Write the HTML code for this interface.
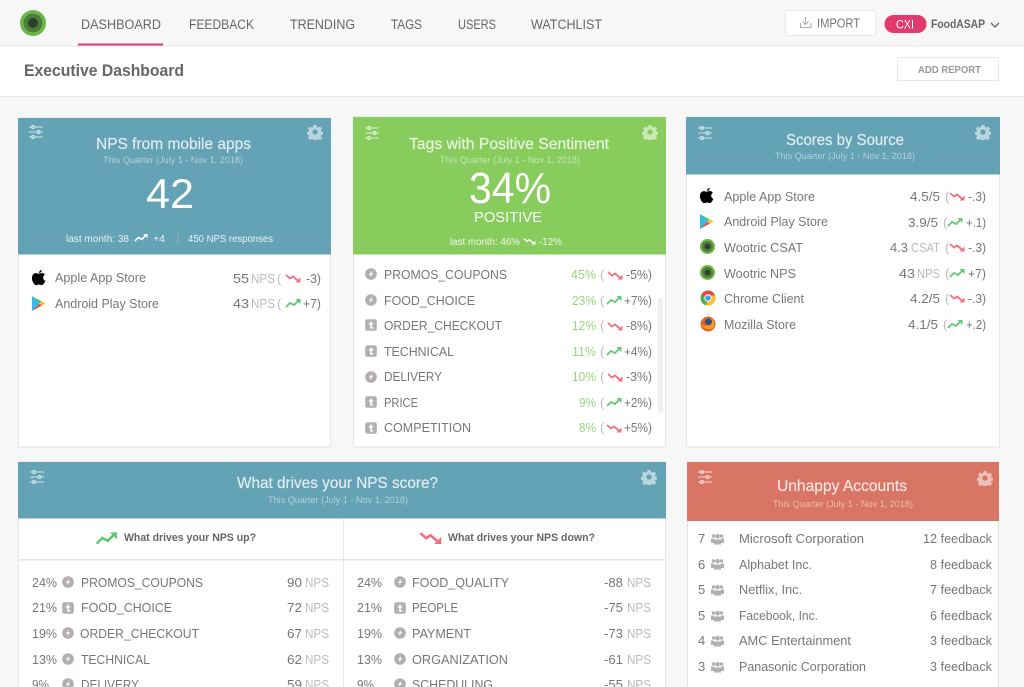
<!DOCTYPE html>
<html lang="en"><head><meta charset="utf-8"><title>Executive Dashboard</title>
<style>
html,body{margin:0;padding:0;width:1024px;height:687px;overflow:hidden;background:#f7f7f7}
svg{display:block;filter:blur(.35px)}
text{font-family:"Liberation Sans",sans-serif;font-size:13px;fill:#777}
.nav{font-size:13.5px;fill:#666}
.h{font-size:16px;fill:#fff;opacity:.8;stroke:#fff;stroke-width:.2}
.s{font-size:9.5px;fill:#fff;opacity:.5}
.f{font-size:10px;fill:#fff;opacity:.85}
.g{fill:#98d67e}.m{fill:#bbb}.b{font-weight:bold;font-size:11px;fill:#666}
.card{fill:#fff;stroke:#e6e6e6}
</style></head><body>
<svg width="1024" height="687" viewBox="0 0 1024 687" xmlns="http://www.w3.org/2000/svg">
<defs>
<symbol id="up" viewBox="0 0 16 10"><path d="M1 9 5 5 9 7 14 2" fill="none" stroke="#5fc974" stroke-width="1.8"/><path d="M10.500 1H15.500V6Z" fill="#5fc974"/></symbol>
<symbol id="dn" viewBox="0 0 16 10"><path d="M1 2 5 5.500 8 3.500 14 8.500" fill="none" stroke="#ef7080" stroke-width="1.8"/><path d="M10.500 9.500H15.500V4.500Z" fill="#ef7080"/></symbol>
<symbol id="wu" viewBox="0 0 16 10"><path d="M1 9 5 5 9 7 14 2" fill="none" stroke="#fff" stroke-width="1.800"/><path d="M10.500 1H15.500V6Z" fill="#fff"/></symbol>
<symbol id="wd" viewBox="0 0 16 10"><path d="M1 2 5 5.500 8 3.500 14 8.500" fill="none" stroke="#fff" stroke-width="1.800"/><path d="M10.500 9.500H15.500V4.500Z" fill="#fff"/></symbol>
<symbol id="fl" viewBox="0 0 16 16" opacity=".7"><path d="M1 3H15M1 8H15M1 13H15" stroke="#fff" stroke-width="1"/><circle cx="5" cy="3" r="1.600" fill="none" stroke="#fff"/><circle cx="10.500" cy="8" r="1.600" fill="none" stroke="#fff"/><circle cx="5" cy="13" r="1.600" fill="none" stroke="#fff"/></symbol>
<symbol id="gr" viewBox="0 0 16 16" opacity=".55"><path fill-rule="evenodd" d="M6.500 1h3l.4 2 1.400.6 1.700-1.100 2.100 2.100-1.100 1.700.6 1.400 2 .4v2.400l-2 .4-.6 1.400 1.100 1.700-2.100 2.100-1.700-1.100-1.400.6-.4 1.800h-3l-.4-1.800-1.400-.6-1.700 1.100-2.100-2.100 1.100-1.700-.6-1.400-2-.4v-2.400l2-.4.6-1.400-1.100-1.700 2.100-2.100 1.700 1.100 1.400-.6zM8 5.400a2.600 2.600 0 1 0 0 5.200a2.600 2.600 0 1 0 0-5.200z" fill="#fff"/></symbol>
<symbol id="ap" viewBox="0 0 16 18"><path d="M11.500 1c.1 1.500-1.300 3.200-3 3.100C8.400 2.500 10 1.100 11.500 1ZM8.300 5c.8 0 1.800-.8 3.300-.8 1.300 0 2.500.7 3.200 1.800-2.700 1.700-2.300 5.300.5 6.500-.7 2-2.300 4.700-3.900 4.700-1 0-1.500-.7-2.800-.7s-1.900.7-2.800.7C3.500 17.200 1 13 1 9.600c0-3.300 2.100-5.300 4.200-5.300 1.300 0 2.400.7 3.100.7Z" fill="#000"/></symbol>
<symbol id="pl" viewBox="0 0 16 18"><path d="M1 1 9 9 1 17Z" fill="#35b8e8"/><path d="M1 1 11.500 6.800 9 9Z" fill="#46c37b"/><path d="M1 17 11.500 11.200 9 9Z" fill="#e84a4a"/><path d="M11.500 6.800 15.500 9 11.500 11.200 9 9Z" fill="#fbc02d"/></symbol>
<symbol id="wo" viewBox="0 0 26 26"><circle cx="13" cy="13" r="13" fill="#6cb847"/><circle cx="13" cy="13" r="9.500" fill="#4d7f3a"/><circle cx="13" cy="13" r="5" fill="#2f3f2e"/></symbol>
<symbol id="ch" viewBox="0 0 16 16"><circle cx="8" cy="8" r="7.500" fill="#e6493c"/><path d="M8 8 1.500 4.500A7.500 7.500 0 0 0 6 15.300Z" fill="#4caf50"/><path d="M8 8 6 15.300A7.500 7.500 0 0 0 15 5.500H8Z" fill="#fbc02d"/><circle cx="8" cy="8" r="3.700" fill="#fff"/><circle cx="8" cy="8" r="2.800" fill="#4a9fe8"/></symbol>
<symbol id="ff" viewBox="0 0 16 16"><circle cx="8" cy="8" r="7.500" fill="#e8611f"/><path d="M1 8C3 13 10 15 14 11 15 8 14 5 12 3 9 1 5 2 5 5 8 5 11 7 8 9 6 10 3 10 1 8Z" fill="#f49b1d"/><circle cx="8.500" cy="5.800" r="3.500" fill="#2f4f88"/></symbol>
<symbol id="bo" viewBox="0 0 12 12"><circle cx="6" cy="6" r="5.800" fill="#b3aeb0"/><path d="M7.500 2.500 3.800 6.800H5.800L4.500 9.500 8.300 5.200H6.300Z" fill="#fff"/></symbol>
<symbol id="tt" viewBox="0 0 12 12"><rect x=".2" y=".2" width="11.600" height="11.600" rx="2.200" fill="#b3aeb0"/><path d="M5.200 2.500H6.800V4.300H8.300V5.600H6.800V8.300H8.300V9.600H5.200V5.600H3.800V4.300H5.200Z" fill="#fff"/></symbol>
<symbol id="pp" viewBox="0 0 13 12"><g fill="#b3aeb0"><circle cx="2.500" cy="3" r="1.700"/><circle cx="10.500" cy="3" r="1.700"/><circle cx="6.500" cy="3.200" r="2.300"/><path d="M0 5.500H3V10H0ZM10 5.500H13V10H10ZM3 6.500H10V11.500H3Z"/></g></symbol>
</defs>

<!-- top nav -->
<rect x="0" y="0" width="1024" height="46" fill="#f7f7f7"/>
<use href="#wo" x="20" y="10" width="26" height="26"/>
<text class="nav" lengthAdjust="spacingAndGlyphs" x="81" y="29" textLength="80">DASHBOARD</text>
<text class="nav" lengthAdjust="spacingAndGlyphs" x="189" y="29" textLength="65">FEEDBACK</text>
<text class="nav" lengthAdjust="spacingAndGlyphs" x="290" y="29" textLength="65">TRENDING</text>
<text class="nav" lengthAdjust="spacingAndGlyphs" x="391" y="29" textLength="31">TAGS</text>
<text class="nav" lengthAdjust="spacingAndGlyphs" x="458" y="29" textLength="38">USERS</text>
<text class="nav" lengthAdjust="spacingAndGlyphs" x="531" y="29" textLength="71">WATCHLIST</text>
<rect x="78" y="43.500" width="85" height="2" fill="#e8386e"/>
<rect x="785.500" y="10.500" width="90" height="25" rx="2" fill="#fff" stroke="#e8e8e8"/>
<path d="M805.500 17v7.500M802.500 21.500l3 3 3-3M800.500 23v4.500h10.500V23" fill="none" stroke="#aaa"/>
<text lengthAdjust="spacingAndGlyphs" x="817" y="27.500" textLength="43" style="font-size:12.500px">IMPORT</text>
<rect x="884.500" y="15" width="42" height="18" rx="9" fill="#e23a6e"/>
<text lengthAdjust="spacingAndGlyphs" x="896" y="28.500" textLength="18" style="font-size:12px;fill:#fff">CXI</text>
<text lengthAdjust="spacingAndGlyphs" x="931" y="28" textLength="54" style="font-size:11.500px;fill:#666;font-weight:bold">FoodASAP</text>
<path d="M991 23l4 4 4-4" fill="none" stroke="#666" stroke-width="1.300"/>
<rect x="0" y="46" width="1024" height="50" fill="#fff"/>
<rect x="0" y="45.500" width="1024" height="1" fill="#e5e5e5"/>
<rect x="0" y="96" width="1024" height="1" fill="#e5e5e5"/>
<text lengthAdjust="spacingAndGlyphs" x="24" y="76" textLength="160" style="font-size:16.500px;font-weight:bold;fill:#666">Executive Dashboard</text>
<rect x="897.500" y="57.500" width="101" height="23" fill="#fff" stroke="#e8e8e8"/>
<text lengthAdjust="spacingAndGlyphs" x="918" y="73" textLength="63" style="font-size:10.500px;fill:#999;font-weight:bold">ADD REPORT</text>

<!-- card 1 -->
<rect class="card" x="18.500" y="118" width="312" height="329"/>
<rect x="18" y="118" width="313" height="136.500" fill="#64a2b5"/>
<use href="#fl" x="28" y="124" width="16" height="16"/>
<use href="#gr" x="307" y="124" width="16" height="16"/>
<text class="h" lengthAdjust="spacingAndGlyphs" x="96" y="149" textLength="155">NPS from mobile apps</text>
<text class="s" lengthAdjust="spacingAndGlyphs" x="103" y="163" textLength="140">This Quarter (July 1 - Nov 1, 2018)</text>
<text lengthAdjust="spacingAndGlyphs" x="146" y="208" textLength="48" style="font-size:42px;fill:#fff">42</text>
<text class="f" lengthAdjust="spacingAndGlyphs" x="66" y="242" textLength="63">last month: 38</text>
<use href="#wu" x="134" y="233" width="14" height="9"/>
<text class="f" lengthAdjust="spacingAndGlyphs" x="153" y="242" textLength="12">+4</text>
<rect x="177.500" y="232" width="1" height="12" fill="#fff" opacity=".2"/>
<text class="f" lengthAdjust="spacingAndGlyphs" x="188" y="242" textLength="85">450 NPS responses</text>
<use href="#ap" x="31" y="269" width="15" height="17"/>
<use href="#pl" x="31" y="295" width="15" height="17"/>
<text lengthAdjust="spacingAndGlyphs" x="55" y="282" textLength="91">Apple App Store</text>
<text lengthAdjust="spacingAndGlyphs" x="55" y="308" textLength="104">Android Play Store</text>
<text lengthAdjust="spacingAndGlyphs" x="233" y="283" textLength="16">55</text><text class="m" lengthAdjust="spacingAndGlyphs" x="251" y="283" textLength="24">NPS</text><text class="m" x="277" y="283">(</text>
<use href="#dn" x="285" y="273" width="16" height="10"/><text lengthAdjust="spacingAndGlyphs" x="306" y="283" textLength="15">-3)</text>
<text lengthAdjust="spacingAndGlyphs" x="233" y="308" textLength="16">43</text><text class="m" lengthAdjust="spacingAndGlyphs" x="251" y="308" textLength="24">NPS</text><text class="m" x="277" y="308">(</text>
<use href="#up" x="285" y="298" width="16" height="10"/><text lengthAdjust="spacingAndGlyphs" x="303" y="308" textLength="18">+7)</text>

<!-- card 2 -->
<rect class="card" x="353.500" y="117" width="312" height="330"/>
<rect x="353" y="117" width="313" height="137.500" fill="#88cc5e"/>
<use href="#fl" x="364" y="125" width="16" height="16"/>
<use href="#gr" x="642" y="124" width="16" height="16"/>
<text class="h" lengthAdjust="spacingAndGlyphs" x="409" y="149" textLength="200">Tags with Positive Sentiment</text>
<text class="s" lengthAdjust="spacingAndGlyphs" x="440" y="163" textLength="140">This Quarter (July 1 - Nov 1, 2018)</text>
<text lengthAdjust="spacingAndGlyphs" x="469" y="203" textLength="82" style="font-size:44px;fill:#fff">34%</text>
<text lengthAdjust="spacingAndGlyphs" x="474" y="222" textLength="68" style="font-size:15px;fill:#fff;opacity:.95">POSITIVE</text>
<text class="f" lengthAdjust="spacingAndGlyphs" x="450" y="245" textLength="70">last month: 46%</text>
<use href="#wd" x="523" y="237" width="13" height="8"/>
<text class="f" lengthAdjust="spacingAndGlyphs" x="539" y="245" textLength="23">-12%</text>
<rect x="658" y="298" width="5" height="115" rx="2.500" fill="#eeeeee"/>

<use href="#bo" x="365" y="268" width="12" height="12"/><text lengthAdjust="spacingAndGlyphs" x="384" y="279" textLength="123">PROMOS_COUPONS</text>
<text class="g" lengthAdjust="spacingAndGlyphs" x="571" y="279" textLength="25">45%</text><text class="m" x="600" y="279">(</text><use href="#dn" x="607" y="270" width="16" height="10"/><text lengthAdjust="spacingAndGlyphs" x="626" y="279" textLength="26">-5%)</text>
<use href="#bo" x="365" y="294" width="12" height="12"/><text lengthAdjust="spacingAndGlyphs" x="384" y="305" textLength="91">FOOD_CHOICE</text>
<text class="g" lengthAdjust="spacingAndGlyphs" x="572" y="305" textLength="24">23%</text><text class="m" x="600" y="305">(</text><use href="#up" x="606" y="295" width="16" height="10"/><text lengthAdjust="spacingAndGlyphs" x="624" y="305" textLength="28">+7%)</text>
<use href="#tt" x="365" y="319" width="12" height="12"/><text lengthAdjust="spacingAndGlyphs" x="384" y="330" textLength="118">ORDER_CHECKOUT</text>
<text class="g" lengthAdjust="spacingAndGlyphs" x="572" y="330" textLength="24">12%</text><text class="m" x="600" y="330">(</text><use href="#dn" x="607" y="321" width="16" height="10"/><text lengthAdjust="spacingAndGlyphs" x="626" y="330" textLength="26">-8%)</text>
<use href="#tt" x="365" y="345" width="12" height="12"/><text lengthAdjust="spacingAndGlyphs" x="384" y="356" textLength="70">TECHNICAL</text>
<text class="g" lengthAdjust="spacingAndGlyphs" x="572" y="356" textLength="24">11%</text><text class="m" x="600" y="356">(</text><use href="#up" x="606" y="346" width="16" height="10"/><text lengthAdjust="spacingAndGlyphs" x="624" y="356" textLength="28">+4%)</text>
<use href="#bo" x="365" y="371" width="12" height="12"/><text lengthAdjust="spacingAndGlyphs" x="384" y="381" textLength="58">DELIVERY</text>
<text class="g" lengthAdjust="spacingAndGlyphs" x="572" y="381" textLength="24">10%</text><text class="m" x="600" y="381">(</text><use href="#dn" x="607" y="372" width="16" height="10"/><text lengthAdjust="spacingAndGlyphs" x="626" y="381" textLength="26">-3%)</text>
<use href="#tt" x="365" y="396" width="12" height="12"/><text lengthAdjust="spacingAndGlyphs" x="384" y="407" textLength="34">PRICE</text>
<text class="g" lengthAdjust="spacingAndGlyphs" x="579" y="407" textLength="17">9%</text><text class="m" x="600" y="407">(</text><use href="#up" x="606" y="397" width="16" height="10"/><text lengthAdjust="spacingAndGlyphs" x="624" y="407" textLength="28">+2%)</text>
<use href="#tt" x="365" y="422" width="12" height="12"/><text lengthAdjust="spacingAndGlyphs" x="384" y="432" textLength="87">COMPETITION</text>
<text class="g" lengthAdjust="spacingAndGlyphs" x="579" y="432" textLength="17">8%</text><text class="m" x="600" y="432">(</text><use href="#dn" x="606" y="423" width="16" height="10"/><text lengthAdjust="spacingAndGlyphs" x="624" y="432" textLength="28">+5%)</text>

<!-- card 3 -->
<rect class="card" x="686.500" y="117" width="313" height="330"/>
<rect x="686" y="117" width="314" height="57.500" fill="#64a2b5"/>
<use href="#fl" x="697" y="125" width="16" height="16"/>
<use href="#gr" x="975" y="124" width="16" height="16"/>
<text class="h" lengthAdjust="spacingAndGlyphs" x="786" y="145" textLength="118">Scores by Source</text>
<text class="s" lengthAdjust="spacingAndGlyphs" x="775" y="159" textLength="140">This Quarter (July 1 - Nov 1, 2018)</text>
<use href="#ap" x="699" y="187" width="15" height="17"/><text lengthAdjust="spacingAndGlyphs" x="724" y="201" textLength="91">Apple App Store</text>
<use href="#pl" x="699" y="213" width="15" height="17"/><text lengthAdjust="spacingAndGlyphs" x="724" y="226" textLength="104">Android Play Store</text>
<use href="#wo" x="700" y="239" width="15" height="15"/><text lengthAdjust="spacingAndGlyphs" x="724" y="252" textLength="79">Wootric CSAT</text>
<use href="#wo" x="700" y="265" width="15" height="15"/><text lengthAdjust="spacingAndGlyphs" x="724" y="278" textLength="72">Wootric NPS</text>
<use href="#ch" x="700" y="290" width="16" height="16"/><text lengthAdjust="spacingAndGlyphs" x="724" y="303" textLength="80">Chrome Client</text>
<use href="#ff" x="700" y="316" width="16" height="16"/><text lengthAdjust="spacingAndGlyphs" x="724" y="329" textLength="72">Mozilla Store</text>
<text lengthAdjust="spacingAndGlyphs" x="910" y="201" textLength="30">4.5/5</text><text class="m" x="945" y="201">(</text><use href="#dn" x="949" y="191" width="16" height="10"/><text lengthAdjust="spacingAndGlyphs" x="968" y="201" textLength="18">-.3)</text>
<text lengthAdjust="spacingAndGlyphs" x="908" y="227" textLength="30">3.9/5</text><text class="m" x="943" y="227">(</text><use href="#up" x="947" y="217" width="16" height="10"/><text lengthAdjust="spacingAndGlyphs" x="966" y="227" textLength="20">+.1)</text>
<text lengthAdjust="spacingAndGlyphs" x="890" y="252" textLength="18">4.3</text><text class="m" lengthAdjust="spacingAndGlyphs" x="911" y="252" textLength="29">CSAT</text><text class="m" x="945" y="252">(</text><use href="#dn" x="949" y="242" width="16" height="10"/><text lengthAdjust="spacingAndGlyphs" x="968" y="252" textLength="18">-.3)</text>
<text lengthAdjust="spacingAndGlyphs" x="899" y="278" textLength="16">43</text><text class="m" lengthAdjust="spacingAndGlyphs" x="917" y="278" textLength="23">NPS</text><text class="m" x="945" y="278">(</text><use href="#up" x="949" y="268" width="16" height="10"/><text lengthAdjust="spacingAndGlyphs" x="968" y="278" textLength="18">+7)</text>
<text lengthAdjust="spacingAndGlyphs" x="910" y="303" textLength="30">4.2/5</text><text class="m" x="945" y="303">(</text><use href="#dn" x="949" y="293" width="16" height="10"/><text lengthAdjust="spacingAndGlyphs" x="968" y="303" textLength="18">-.3)</text>
<text lengthAdjust="spacingAndGlyphs" x="908" y="329" textLength="30">4.1/5</text><text class="m" x="943" y="329">(</text><use href="#up" x="947" y="319" width="16" height="10"/><text lengthAdjust="spacingAndGlyphs" x="966" y="329" textLength="20">+.2)</text>

<!-- card 4 -->
<rect class="card" x="18.500" y="462" width="647" height="240"/>
<rect x="18" y="462" width="648" height="56.500" fill="#64a2b5"/>
<use href="#fl" x="29" y="469" width="16" height="16"/>
<use href="#gr" x="641" y="469" width="16" height="16"/>
<text class="h" lengthAdjust="spacingAndGlyphs" x="237" y="488" textLength="201">What drives your NPS score?</text>
<text class="s" lengthAdjust="spacingAndGlyphs" x="268" y="503" textLength="140">This Quarter (July 1 - Nov 1, 2018)</text>
<rect x="18" y="559" width="648" height="1.500" fill="#e6e6e6"/>
<rect x="343" y="518" width="1" height="169" fill="#e6e6e6"/>
<use href="#up" x="95" y="531" width="23" height="14"/>
<text class="b" lengthAdjust="spacingAndGlyphs" x="124" y="541" textLength="132">What drives your NPS up?</text>
<use href="#dn" x="419" y="530" width="23" height="15"/>
<text class="b" lengthAdjust="spacingAndGlyphs" x="448" y="541" textLength="147">What drives your NPS down?</text>

<text lengthAdjust="spacingAndGlyphs" x="32" y="587" textLength="25">24%</text><use href="#bo" x="62" y="576" width="12" height="12"/><text lengthAdjust="spacingAndGlyphs" x="81" y="587" textLength="122">PROMOS_COUPONS</text><text lengthAdjust="spacingAndGlyphs" x="287" y="587" textLength="15">90</text><text class="m" lengthAdjust="spacingAndGlyphs" x="305" y="587" textLength="24">NPS</text>
<text lengthAdjust="spacingAndGlyphs" x="32" y="612" textLength="25">21%</text><use href="#tt" x="62" y="602" width="12" height="12"/><text lengthAdjust="spacingAndGlyphs" x="81" y="612" textLength="91">FOOD_CHOICE</text><text lengthAdjust="spacingAndGlyphs" x="287" y="612" textLength="15">72</text><text class="m" lengthAdjust="spacingAndGlyphs" x="305" y="612" textLength="24">NPS</text>
<text lengthAdjust="spacingAndGlyphs" x="32" y="638" textLength="25">19%</text><use href="#bo" x="62" y="627" width="12" height="12"/><text lengthAdjust="spacingAndGlyphs" x="80" y="638" textLength="119">ORDER_CHECKOUT</text><text lengthAdjust="spacingAndGlyphs" x="287" y="638" textLength="15">67</text><text class="m" lengthAdjust="spacingAndGlyphs" x="305" y="638" textLength="24">NPS</text>
<text lengthAdjust="spacingAndGlyphs" x="32" y="664" textLength="25">13%</text><use href="#bo" x="62" y="653" width="12" height="12"/><text lengthAdjust="spacingAndGlyphs" x="81" y="664" textLength="69">TECHNICAL</text><text lengthAdjust="spacingAndGlyphs" x="287" y="664" textLength="15">62</text><text class="m" lengthAdjust="spacingAndGlyphs" x="305" y="664" textLength="24">NPS</text>
<text lengthAdjust="spacingAndGlyphs" x="32" y="689" textLength="17">9%</text><use href="#bo" x="62" y="678" width="12" height="12"/><text lengthAdjust="spacingAndGlyphs" x="81" y="689" textLength="58">DELIVERY</text><text lengthAdjust="spacingAndGlyphs" x="287" y="689" textLength="15">59</text><text class="m" lengthAdjust="spacingAndGlyphs" x="305" y="689" textLength="24">NPS</text>

<text lengthAdjust="spacingAndGlyphs" x="357" y="587" textLength="25">24%</text><use href="#bo" x="394" y="576" width="12" height="12"/><text lengthAdjust="spacingAndGlyphs" x="412" y="587" textLength="97">FOOD_QUALITY</text><text lengthAdjust="spacingAndGlyphs" x="604" y="587" textLength="19">-88</text><text class="m" lengthAdjust="spacingAndGlyphs" x="627" y="587" textLength="24">NPS</text>
<text lengthAdjust="spacingAndGlyphs" x="357" y="612" textLength="25">21%</text><use href="#tt" x="394" y="602" width="12" height="12"/><text lengthAdjust="spacingAndGlyphs" x="412" y="612" textLength="46">PEOPLE</text><text lengthAdjust="spacingAndGlyphs" x="604" y="612" textLength="19">-75</text><text class="m" lengthAdjust="spacingAndGlyphs" x="627" y="612" textLength="24">NPS</text>
<text lengthAdjust="spacingAndGlyphs" x="357" y="638" textLength="25">19%</text><use href="#bo" x="394" y="627" width="12" height="12"/><text lengthAdjust="spacingAndGlyphs" x="412" y="638" textLength="59">PAYMENT</text><text lengthAdjust="spacingAndGlyphs" x="604" y="638" textLength="19">-73</text><text class="m" lengthAdjust="spacingAndGlyphs" x="627" y="638" textLength="24">NPS</text>
<text lengthAdjust="spacingAndGlyphs" x="357" y="664" textLength="25">13%</text><use href="#bo" x="394" y="653" width="12" height="12"/><text lengthAdjust="spacingAndGlyphs" x="412" y="664" textLength="96">ORGANIZATION</text><text lengthAdjust="spacingAndGlyphs" x="604" y="664" textLength="19">-61</text><text class="m" lengthAdjust="spacingAndGlyphs" x="627" y="664" textLength="24">NPS</text>
<text lengthAdjust="spacingAndGlyphs" x="357" y="689" textLength="17">9%</text><use href="#bo" x="394" y="678" width="12" height="12"/><text lengthAdjust="spacingAndGlyphs" x="412" y="689" textLength="81">SCHEDULING</text><text lengthAdjust="spacingAndGlyphs" x="604" y="689" textLength="19">-55</text><text class="m" lengthAdjust="spacingAndGlyphs" x="627" y="689" textLength="24">NPS</text>

<!-- card 5 -->
<rect class="card" x="687.500" y="462" width="311" height="240"/>
<rect x="687" y="462" width="312" height="59" fill="#d87565"/>
<use href="#fl" x="697" y="469" width="16" height="16"/>
<use href="#gr" x="977" y="470" width="16" height="16"/>
<text class="h" lengthAdjust="spacingAndGlyphs" x="777" y="491" textLength="130">Unhappy Accounts</text>
<text class="s" lengthAdjust="spacingAndGlyphs" x="773" y="507" textLength="140">This Quarter (July 1 - Nov 1, 2018)</text>
<text x="698" y="543">7</text><use href="#pp" x="711" y="533" width="13" height="12"/><text lengthAdjust="spacingAndGlyphs" x="739" y="543" textLength="125">Microsoft Corporation</text><text lengthAdjust="spacingAndGlyphs" x="923" y="543" textLength="69">12 feedback</text>
<text x="698" y="569">6</text><use href="#pp" x="711" y="558" width="13" height="12"/><text lengthAdjust="spacingAndGlyphs" x="739" y="569" textLength="73">Alphabet Inc.</text><text lengthAdjust="spacingAndGlyphs" x="930" y="569" textLength="62">8 feedback</text>
<text x="698" y="594">5</text><use href="#pp" x="711" y="584" width="13" height="12"/><text lengthAdjust="spacingAndGlyphs" x="739" y="594" textLength="63">Netflix, Inc.</text><text lengthAdjust="spacingAndGlyphs" x="930" y="594" textLength="62">7 feedback</text>
<text x="698" y="620">5</text><use href="#pp" x="711" y="610" width="13" height="12"/><text lengthAdjust="spacingAndGlyphs" x="739" y="620" textLength="79">Facebook, Inc.</text><text lengthAdjust="spacingAndGlyphs" x="930" y="620" textLength="62">6 feedback</text>
<text x="698" y="645">4</text><use href="#pp" x="711" y="635" width="13" height="12"/><text lengthAdjust="spacingAndGlyphs" x="739" y="645" textLength="112">AMC Entertainment</text><text lengthAdjust="spacingAndGlyphs" x="930" y="645" textLength="62">3 feedback</text>
<text x="698" y="671">3</text><use href="#pp" x="711" y="661" width="13" height="12"/><text lengthAdjust="spacingAndGlyphs" x="739" y="671" textLength="127">Panasonic Corporation</text><text lengthAdjust="spacingAndGlyphs" x="930" y="671" textLength="62">3 feedback</text>
<text x="698" y="697">3</text><use href="#pp" x="711" y="686" width="13" height="12"/><text lengthAdjust="spacingAndGlyphs" x="739" y="697" textLength="90">Oracle Corporation</text><text lengthAdjust="spacingAndGlyphs" x="930" y="697" textLength="62">2 feedback</text>
</svg>
</body></html>
